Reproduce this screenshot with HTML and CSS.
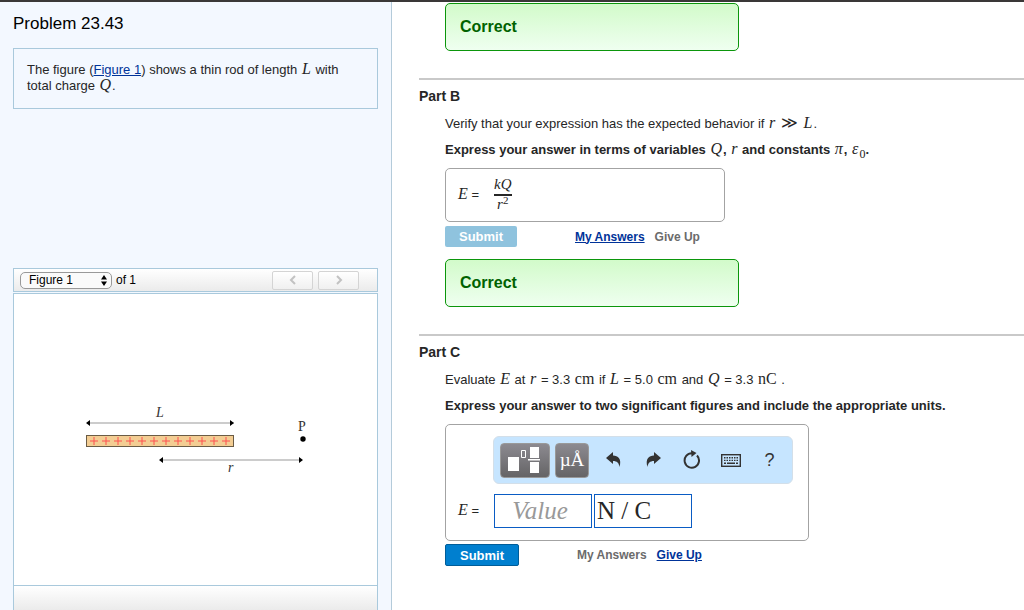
FILE: index.html
```html
<!DOCTYPE html>
<html lang="en">
<head>
  <meta charset="utf-8" />
  <meta name="viewport" content="width=device-width, initial-scale=1" />
  <title>Problem 23.43</title>
  <link rel="stylesheet" href="styles.css">
</head>
<body>

  <aside class="sidebar">
    <h1 class="problem-title">Problem 23.43</h1>

    <p class="intro">The figure (<a href="#figure">Figure 1</a>) shows a thin rod of length <var>L</var> with total charge <var>Q</var>.</p>

    <section class="figure-panel" id="figure">
      <div class="figure-bar">
        <label class="figure-select">
          <select aria-label="Figure">
            <option>Figure 1</option>
          </select>
          <svg class="select-arrows" width="6" height="11" viewBox="0 0 6 11" aria-hidden="true">
            <path d="M0 4.5 3 0l3 4.5zM0 6.5h6L3 11z" />
          </svg>
        </label>
        <span class="figure-count">of 1</span>
        <div class="figure-nav">
          <button type="button" aria-label="Previous figure" disabled>
            <svg width="8" height="10" viewBox="0 0 8 10"><path d="M6 1 2 5l4 4" /></svg>
          </button>
          <button type="button" aria-label="Next figure" disabled>
            <svg width="8" height="10" viewBox="0 0 8 10"><path d="M2 1l4 4-4 4" /></svg>
          </button>
        </div>
      </div>

      <div class="figure-view">
        <svg class="rod" width="250" height="80" viewBox="0 0 250 80" role="img" aria-label="Charged rod of length L and point P at distance r">
          <g class="rod-lines">
            <path d="M17 23h146M91 60h140" />
          </g>
          <g class="rod-heads">
            <path d="M15 23l4-3v6zM163 23l-4-3v6zM88 60l4-3v6zM232 60l-4-3v6z" />
          </g>
          <rect class="rod-body" x="15.500" y="35.500" width="147" height="11" />
          <path class="rod-plus" d="M19 41h8m-4-4v8M31 41h8m-4-4v8M43 41h8m-4-4v8M55 41h8m-4-4v8M67 41h8m-4-4v8M79 41h8m-4-4v8M91 41h8m-4-4v8M103 41h8m-4-4v8M115 41h8m-4-4v8M127 41h8m-4-4v8M139 41h8m-4-4v8M151 41h8m-4-4v8" />
          <circle cx="232" cy="39" r="2.700" />
          <text class="rod-var" x="85" y="17">L</text>
          <text class="rod-var" x="157" y="72">r</text>
          <text class="rod-point" x="227" y="31">P</text>
        </svg>
      </div>

      <div class="figure-foot"></div>
    </section>
  </aside>

  <main class="parts">
    <div class="correct">Correct</div>

    <section class="part">
      <h2>Part B</h2>
      <p>Verify that your expression has the expected behavior if <var>r</var> <span class="math">≫</span> <var>L</var>.</p>
      <p class="directions">Express your answer in terms of variables <var>Q</var>, <var>r</var> and constants <var>π</var>, <var>ε</var><sub>0</sub>.</p>

      <div class="answer answer-done">
        <span class="answer-label"><var>E</var> =</span>
        <span class="fraction">
          <span class="numerator"><var>kQ</var></span>
          <span class="denominator"><var>r</var><sup>2</sup></span>
        </span>
      </div>

      <div class="actions">
        <button class="submit" type="button" disabled>Submit</button>
        <a href="#answers">My Answers</a>
        <span>Give Up</span>
      </div>

      <div class="correct">Correct</div>
    </section>

    <section class="part">
      <h2>Part C</h2>
      <p>Evaluate <var>E</var> at <var>r</var> = 3.3 <span class="math">cm</span> if <var>L</var> = 5.0 <span class="math">cm</span> and <var>Q</var> = 3.3 <span class="math">nC</span> .</p>
      <p class="directions">Express your answer to two significant figures and include the appropriate units.</p>

      <form class="answer answer-entry">
        <div class="toolbar">
          <button class="tool-dark tool-templates" type="button" aria-label="Templates">
            <svg width="32" height="28" viewBox="0 0 32 28">
              <path fill="#fff" d="M0 11h11v14H0zM22 1h9v11h-9zM22 16h9v11h-9zM20 13h12v1.500H20z" />
              <path fill="none" stroke="#fff" d="M13.500 4.500h4v7h-4z" />
            </svg>
          </button>
          <button class="tool-dark tool-units" type="button">µÅ</button>
          <button class="tool" type="button" aria-label="Undo">
            <svg width="16" height="16" viewBox="0 0 16 16"><path d="M0 6 7 0v3.500c5 0 9 3.500 6.500 11.500C13 11 11 9 7 9v3z" /></svg>
          </button>
          <button class="tool" type="button" aria-label="Redo">
            <svg width="16" height="16" viewBox="0 0 16 16"><path d="M16 6 9 0v3.500c-5 0-9 3.500-6.500 11.500C3 11 5 9 9 9v3z" /></svg>
          </button>
          <button class="tool" type="button" aria-label="Reset">
            <svg width="18" height="20" viewBox="0 0 18 20">
              <path fill="none" stroke="#333" stroke-width="2" d="M14 5.500a7.200 7.200 0 1 1-5-2.200" />
              <path d="M8 0l5.500 3L8.500 7z" />
            </svg>
          </button>
          <button class="tool" type="button" aria-label="Keyboard">
            <svg width="20" height="13" viewBox="0 0 20 13">
              <rect x=".700" y=".700" width="18.600" height="11.600" fill="none" stroke="#333" stroke-width="1.400" />
              <path fill="none" stroke="#333" stroke-width="1.400" stroke-dasharray="1.500 1" d="M3 3.700h14.500M3 6.400h14.500" />
              <path d="M3 8.500h2V10H3zM6 8.500h8V10H6zM15 8.500h2V10h-2z" />
            </svg>
          </button>
          <button class="tool tool-help" type="button" aria-label="Help">?</button>
        </div>

        <div class="entry-row">
          <span class="answer-label"><var>E</var> =</span>
          <input class="value-input" type="text" placeholder="Value" aria-label="Value">
          <input class="units-input" type="text" value="N / C" aria-label="Units">
        </div>
      </form>

      <div class="actions actions-open">
        <button class="submit" type="button">Submit</button>
        <span>My Answers</span>
        <a href="#giveup">Give Up</a>
      </div>
    </section>
  </main>

</body>
</html>
```

FILE: styles.css
```css
* {
  box-sizing: border-box;
}

body {
  margin: 0;
  display: flex;
  height: 100vh;
  border-top: 2px solid #3a3838;
  background: #fff;
  color: #262626;
  font: 13px/16px "Liberation Sans", Arial, sans-serif;
}

h1, h2, p {
  margin: 0;
}

a {
  color: #039;
}

button, input, select {
  font-family: inherit;
  margin: 0;
  padding: 0;
}

button {
  display: flex;
  align-items: center;
  justify-content: center;
}

var, .math, sub, sup {
  font-family: "Liberation Serif", "Times New Roman", serif;
  font-size: 16px;
  font-weight: normal;
  line-height: 0;
}

var {
  font-style: italic;
}

sub, sup {
  font-size: 12px;
}

/* left column */

.sidebar {
  flex: 0 0 392px;
  display: flex;
  flex-direction: column;
  padding: 11px 13px 0;
  border-right: 1px solid #b4cbda;
  background: #f3f8ff;
  overflow: hidden;
}

.problem-title {
  color: #000;
  font-size: 17px;
  font-weight: normal;
  line-height: 22px;
}

.intro {
  margin-top: 13px;
  padding: 13px 13px 14px;
  border: 1px solid #a9c9dc;
}

.intro var {
  margin: 0 1px;
}

.figure-panel {
  flex: 1;
  display: flex;
  flex-direction: column;
  margin-top: 159px;
}

.figure-bar {
  display: flex;
  align-items: center;
  height: 24px;
  padding: 0 18px 0 6px;
  border: 1px solid #a9c9dc;
  background: linear-gradient(#fff, #ebebeb);
  color: #000;
  font-size: 12px;
}

.figure-select {
  position: relative;
  display: flex;
}

.figure-select select {
  appearance: none;
  width: 92px;
  height: 17px;
  padding: 0 8px;
  border: 1px solid #999;
  border-radius: 5px;
  background: #fafafa;
  color: #000;
  font-size: 12px;
  line-height: 15px;
}

.select-arrows {
  position: absolute;
  top: 3px;
  right: 5px;
  pointer-events: none;
}

.figure-count {
  margin-left: 4px;
}

.figure-nav {
  display: flex;
  gap: 5px;
  margin-left: auto;
}

.figure-nav button {
  width: 41px;
  height: 19px;
  border: 1px solid #d4d4d4;
  border-radius: 2px;
  background: linear-gradient(#fff, #f0f0f0);
}

.figure-nav path {
  fill: none;
  stroke: #c2c2c2;
  stroke-width: 2;
}

.figure-view {
  flex: 1;
  display: flex;
  align-items: center;
  justify-content: center;
  margin-top: 1px;
  border: 1px solid #a9c9dc;
  background: #fff;
}

.figure-foot {
  height: 24px;
  border: 1px solid #a9c9dc;
  border-width: 0 1px;
  background: linear-gradient(#fff, #ebebeb);
}

.rod-lines {
  stroke: #999;
}

.rod-body {
  fill: #f3cd93;
  stroke: #6b5c45;
}

.rod-plus {
  fill: none;
  stroke: #ff5050;
}

.rod-var, .rod-point {
  fill: #333;
  font-family: "Liberation Serif", "Times New Roman", serif;
  font-size: 14px;
}

.rod-var {
  font-style: italic;
}

/* right column */

.parts {
  flex: 1;
  min-width: 0;
  padding: 1px 0 0 27px;
  overflow: hidden;
}

.correct {
  width: 294px;
  height: 48px;
  margin-left: 26px;
  padding: 0 14px;
  border: 1px solid #0b960b;
  border-radius: 5px;
  background: linear-gradient(#d2fbca, #effff0);
  color: #006200;
  font-size: 16px;
  font-weight: bold;
  line-height: 46px;
}

.part {
  margin-top: 27px;
  padding-top: 7px;
  border-top: 2px solid #c9c9c9;
}

.part h2 {
  margin-bottom: 10px;
  font-size: 14px;
  line-height: 18px;
}

.part p {
  height: 18px;
  margin: 0 0 8px 26px;
  line-height: 18px;
  white-space: nowrap;
}

.part p var,
.part p .math {
  margin: 0 1px;
}

.part .directions {
  margin-bottom: 9px;
  font-weight: bold;
}

.answer {
  margin-left: 26px;
  border: 1px solid #a3a3a3;
  border-radius: 5px;
  background: #fff;
}

.answer-label {
  flex: none;
  width: 36px;
}

.answer-done {
  display: flex;
  align-items: center;
  width: 280px;
  height: 54px;
  padding: 0 12px;
}

.fraction {
  display: flex;
  flex-direction: column;
  text-align: center;
  line-height: 16px;
}

.fraction var {
  font-size: 15px;
}

.fraction sup {
  font-size: 11px;
}

.numerator {
  padding-bottom: 1px;
  border-bottom: 2px solid #262626;
}

.denominator {
  padding-top: 1px;
}

.actions {
  display: flex;
  align-items: center;
  margin: 4px 0 12px 26px;
  color: #6b6b6b;
  font-size: 12px;
  font-weight: bold;
}

.actions > :last-child {
  margin-left: 10px;
}

.submit {
  width: 72px;
  height: 21px;
  margin-right: 58px;
  border: 0;
  border-radius: 2px;
  background: #007fcf;
  color: #fff;
  font-size: 13px;
  font-weight: bold;
}

.submit:disabled {
  background: #8fc3de;
}

.actions-open {
  margin-top: 3px;
}

.actions-open .submit {
  width: 74px;
  height: 22px;
  border: 1px solid #005d99;
}

/* answer entry */

.answer-entry {
  width: 364px;
  padding: 11px 12px 12px;
}

.toolbar {
  display: flex;
  align-items: center;
  width: 300px;
  height: 48px;
  margin-left: 35px;
  padding-left: 6px;
  border: 1px solid #d3dfe9;
  border-radius: 6px;
  background: #c6e5ff;
}

.tool-dark {
  height: 35px;
  margin-right: 5px;
  border: 1px solid #999;
  border-radius: 4px;
  background: linear-gradient(#8c8a90, #656466);
  color: #fff;
}

.tool-templates {
  width: 50px;
  padding-right: 3px;
}

.tool-units {
  width: 34px;
  font: 19px "Liberation Serif", "Times New Roman", serif;
}

.tool {
  width: 39px;
  height: 35px;
  border: 0;
  background: none;
  color: #333;
}

.tool svg {
  fill: #333;
}

.tool-help {
  font-size: 18px;
}

.entry-row {
  display: flex;
  align-items: center;
  margin-top: 10px;
}

.entry-row input {
  width: 98px;
  height: 34px;
  border: 1px solid #0a5cc4;
  color: #262626;
  font: 25px "Liberation Serif", "Times New Roman", serif;
}

.entry-row .value-input {
  margin-right: 2px;
  padding-right: 6px;
  text-align: center;
}

.value-input::placeholder {
  color: #999;
  font-style: italic;
}

.units-input {
  padding: 0 2px;
}
```
